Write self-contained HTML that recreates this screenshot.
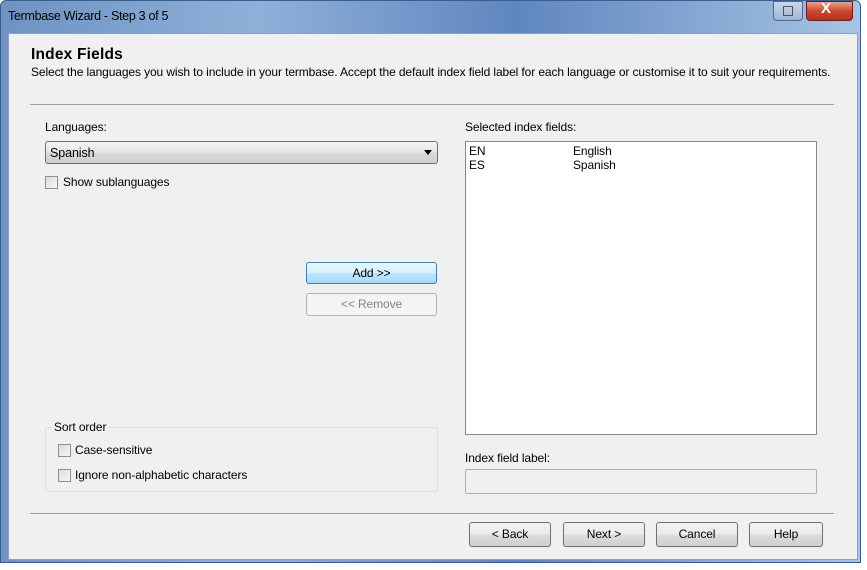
<!DOCTYPE html>
<html><head><style>
*{margin:0;padding:0;box-sizing:border-box}
body{width:867px;height:570px;background:#fff;position:relative;overflow:hidden;font-family:"Liberation Sans",sans-serif;font-size:12px;color:#000;letter-spacing:-0.1px}
.a{position:absolute}
.frame{left:0;top:0;width:861px;height:563px;background:linear-gradient(90deg,#6d93c4 0%,#8fb0d8 30%,#5f86bf 60%,#a8c4e4 100%);border:1px solid #3a5f8f;border-radius:6px 6px 0 0}
.content{left:8px;top:33px;width:850px;height:527px;background:#f0f0f0;border:1px solid #8aa2c0}
.btn{position:absolute;border:1px solid #707070;border-radius:3px;background:linear-gradient(#f2f2f2,#ebebeb 50%,#dddddd 51%,#cfcfcf);text-align:center;line-height:23px}
.cb{position:absolute;width:13px;height:13px;border:1px solid #8f8f8f;background:linear-gradient(135deg,#dcdcdc,#f6f6f6)}
</style></head><body>
<div class="a frame"></div>
<div class="a" style="left:8px;top:9px;font-size:12.5px;color:#000;letter-spacing:-0.3px">Termbase Wizard - Step 3 of 5</div>
<div class="a" style="left:773px;top:1px;width:30px;height:20px;border:1px solid #4b6a93;border-radius:0 0 4px 4px;background:linear-gradient(#c9d8ec,#9db5d6)"></div>
<div class="a" style="left:783px;top:6px;width:10px;height:10px;border:1.5px solid #555"></div>
<div class="a" style="left:806px;top:1px;width:47px;height:20px;border:1px solid #6b1e14;border-radius:0 0 4px 4px;background:linear-gradient(#e8a493,#c9482f 50%,#b8301b)"></div>
<div class="a" style="left:821px;top:0px;color:#fff;font-weight:bold;font-size:15px">X</div>
<div class="a content"></div>
<div class="a" style="left:31px;top:46px;font-weight:bold;font-size:15.5px;letter-spacing:0.2px">Index Fields</div>
<div class="a" style="left:31px;top:65px;letter-spacing:-0.11px">Select the languages you wish to include in your termbase. Accept the default index field label for each language or customise it to suit your requirements.</div>
<div class="a" style="left:30px;top:104px;width:804px;height:1px;background:#a0a0a0"></div>
<div class="a" style="left:45px;top:120px">Languages:</div>
<div class="a" style="left:45px;top:141px;width:393px;height:23px;border:1px solid #707070;border-radius:3px;background:linear-gradient(#f4f4f4,#e6e6e6 50%,#d9d9d9 51%,#d0d0d0);padding:4px 4px;font-size:12.5px">Spanish</div>
<div class="a" style="left:424px;top:150px;width:0;height:0;border-left:4px solid transparent;border-right:4px solid transparent;border-top:5px solid #000"></div>
<div class="cb" style="left:45px;top:176px"></div>
<div class="a" style="left:63px;top:175px">Show sublanguages</div>
<div class="btn" style="left:306px;top:262px;width:131px;height:22px;line-height:20px;border-color:#3c7fb1;background:linear-gradient(#eaf6fd,#d9f0fc 50%,#bee6fd 51%,#a7d9f5)">Add &gt;&gt;</div>
<div class="btn" style="left:306px;top:293px;width:131px;height:23px;line-height:21px;border-color:#adb2b5;background:#f4f4f4;color:#838383">&lt;&lt; Remove</div>
<div class="a" style="left:465px;top:120px">Selected index fields:</div>
<div class="a" style="left:465px;top:141px;width:352px;height:294px;background:#fff;border:1px solid #828790"></div>
<div class="a" style="left:469px;top:144px;line-height:14px">EN<br>ES</div>
<div class="a" style="left:573px;top:144px;line-height:14px">English<br>Spanish</div>
<div class="a" style="left:45px;top:427px;width:393px;height:65px;border:1px solid #d5dfe5;border-radius:3px"></div>
<div class="a" style="left:52px;top:420px;background:#f0f0f0;padding:0 2px">Sort order</div>
<div class="cb" style="left:58px;top:444px"></div>
<div class="a" style="left:75px;top:443px">Case-sensitive</div>
<div class="cb" style="left:58px;top:469px"></div>
<div class="a" style="left:75px;top:468px">Ignore non-alphabetic characters</div>
<div class="a" style="left:465px;top:451px">Index field label:</div>
<div class="a" style="left:465px;top:469px;width:352px;height:25px;border:1px solid #b0b0b0;border-radius:2px;background:#f0f0f0"></div>
<div class="a" style="left:30px;top:513px;width:804px;height:1px;background:#a0a0a0"></div>
<div class="btn" style="left:469px;top:522px;width:82px;height:25px">&lt; Back</div>
<div class="btn" style="left:563px;top:522px;width:82px;height:25px">Next &gt;</div>
<div class="btn" style="left:656px;top:522px;width:82px;height:25px">Cancel</div>
<div class="btn" style="left:749px;top:522px;width:74px;height:25px">Help</div>
</body></html>
